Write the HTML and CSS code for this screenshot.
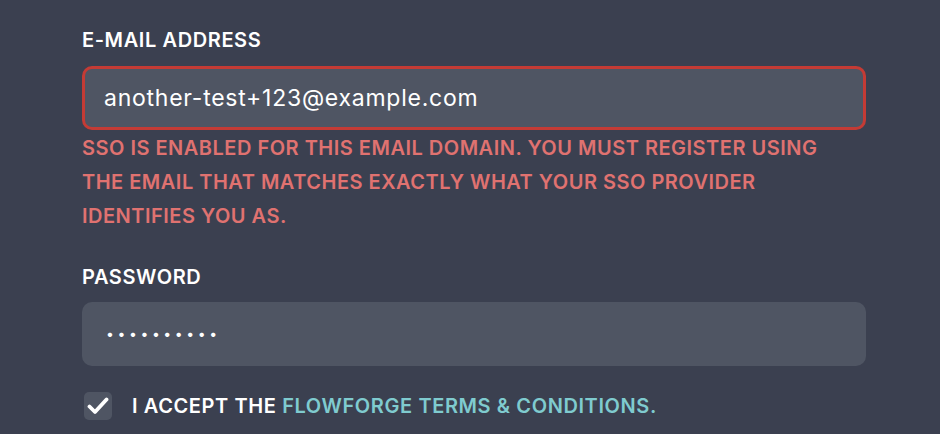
FILE: index.html
```html
<!DOCTYPE html>
<html>
<head>
<meta charset="utf-8">
<link rel="stylesheet" href="styles.css">
</head>
<body>
<form class="form">
  <div class="field">
    <label class="label">E-mail Address</label>
    <div class="input input-error">another-test+123@example.com</div>
    <p class="error">SSO is enabled for this email domain. You must register using the email that matches exactly what your SSO provider identifies you as.</p>
  </div>
  <div class="field field-password">
    <label class="label">Password</label>
    <div class="input input-password">••••••••••</div>
  </div>
  <div class="accept">
    <span class="checkbox">
      <svg width="22" height="18" viewBox="0 0 22 18"><path d="M2.5 9.5 L8 15 L19.5 2.5" fill="none" stroke="#ffffff" stroke-width="3.8" stroke-linecap="round" stroke-linejoin="round"/></svg>
    </span>
    <span class="accept-text">I accept the <a class="link">FlowForge Terms &amp; Conditions.</a></span>
  </div>
</form>
</body>
</html>
```
FILE: styles.css
```css
html, body {
  margin: 0;
  padding: 0;
  background: #3b4050;
  height: 100%;
}
body {
  font-family: Inter, "Noto Sans", sans-serif;
  color: #ffffff;
}
.form {
  width: 784px;
  padding: 27px 0 0 82px;
  display: flex;
  flex-direction: column;
}
.label {
  display: block;
  font-size: 20px;
  font-weight: 600;
  letter-spacing: 0.6px;
  text-transform: uppercase;
  line-height: 26px;
  margin-bottom: 13px;
}
.field-password .label {
  margin-bottom: 12px;
}
.input {
  box-sizing: border-box;
  height: 64px;
  border-radius: 10px;
  background: #4f5563;
  font-size: 23px;
  letter-spacing: 0.75px;
  line-height: 64px;
  padding-left: 22px;
  color: #ffffff;
}
.input-error {
  border: 3px solid #c43b35;
  line-height: 58px;
  padding-left: 19px;
}
.error {
  margin: 1px 0 0 0;
  max-width: 770px;
  color: #e07270;
  font-size: 20px;
  font-weight: 600;
  letter-spacing: 0.5px;
  text-transform: uppercase;
  line-height: 34px;
}
.field-password {
  margin-top: 31px;
}
.input-password {
  font-size: 14px;
  letter-spacing: 3.6px;
  padding-left: 24px;
}
.accept {
  display: flex;
  align-items: center;
  margin-top: 26px;
  gap: 20px;
}
.checkbox {
  width: 28px;
  height: 28px;
  margin-left: 2px;
  border-radius: 5px;
  background: #4f5563;
  display: flex;
  align-items: center;
  justify-content: center;
}
.accept-text {
  font-size: 20px;
  font-weight: 600;
  letter-spacing: 0.6px;
  text-transform: uppercase;
}
.link {
  color: #7fcbcf;
}
```
